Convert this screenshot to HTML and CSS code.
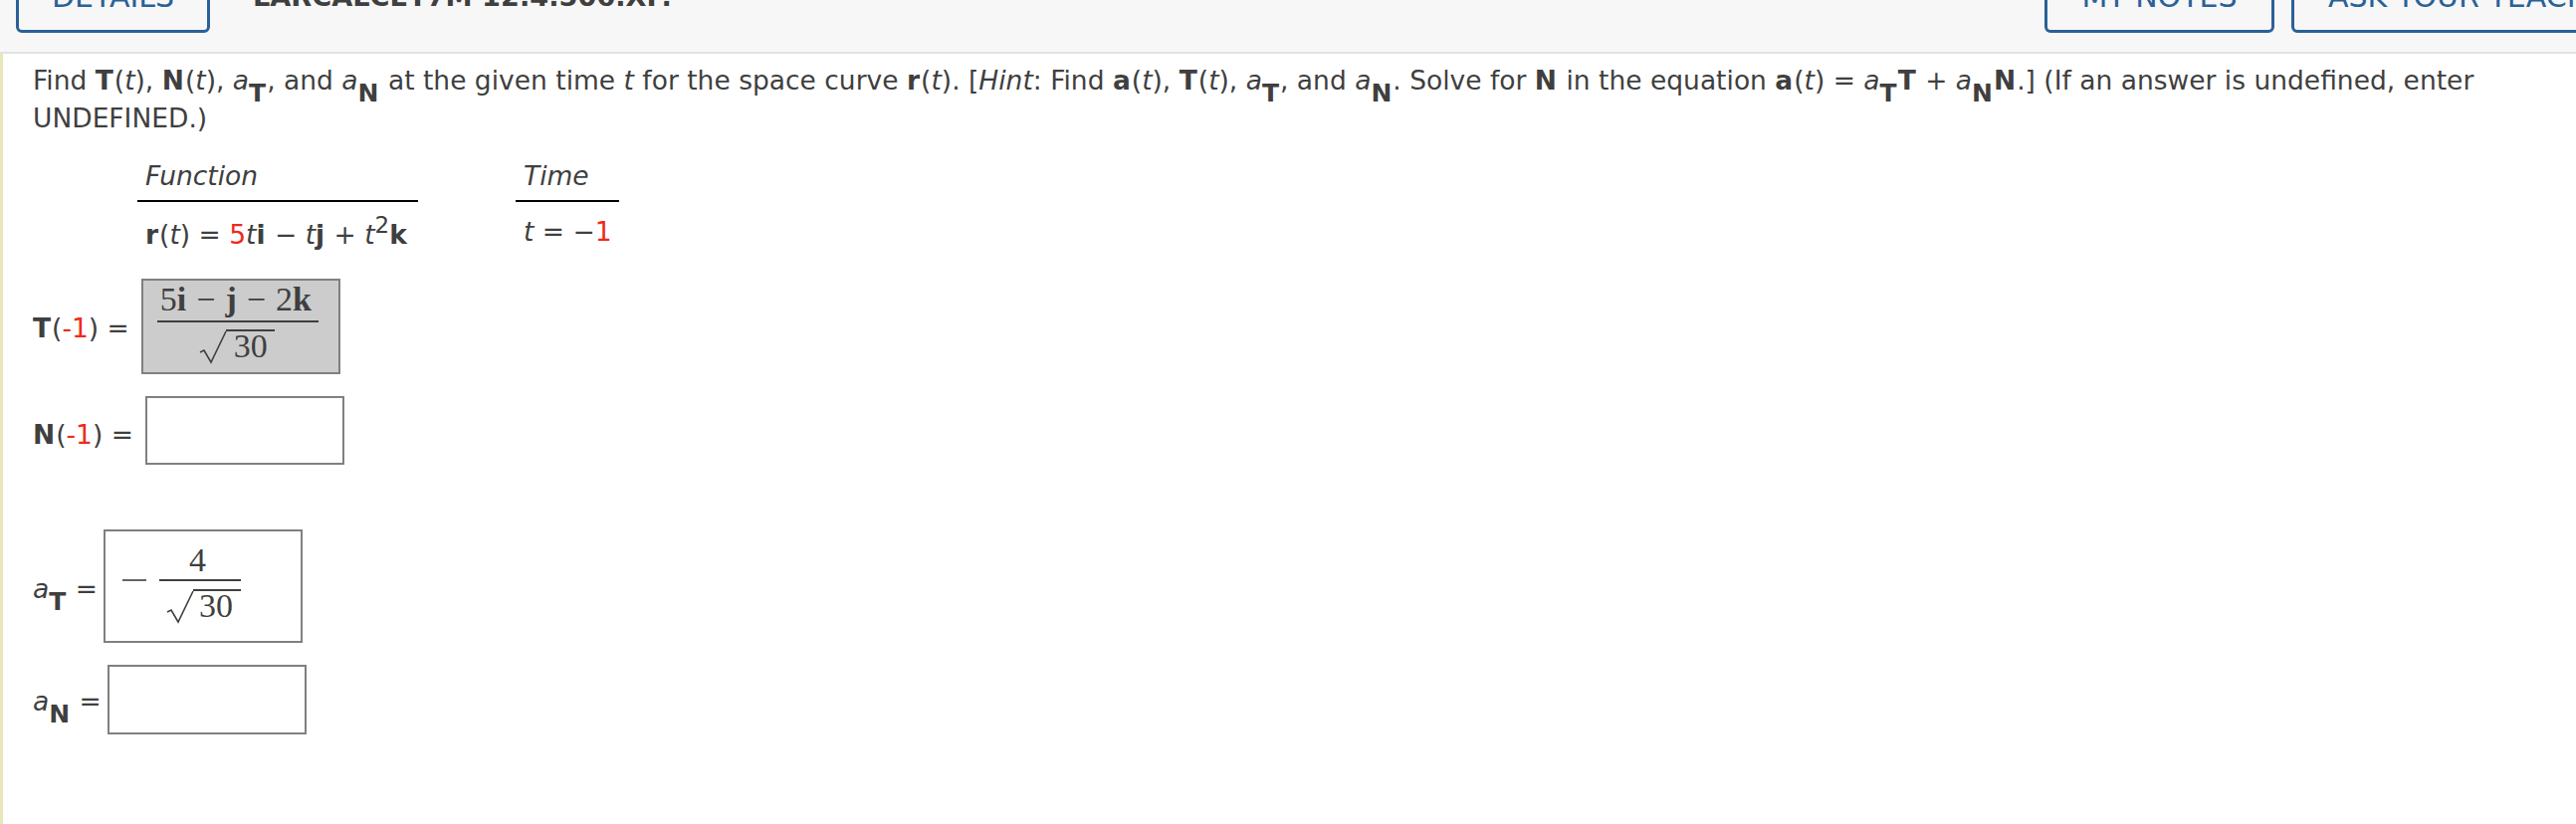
FILE: index.html
```html
<!DOCTYPE html>
<html lang="en">
<head>
<meta charset="utf-8">
<title>LARCALCET7M 12.4.506.XP.</title>
<link rel="stylesheet" href="styles.css">
</head>
<body>
<header class="topbar">
  <button class="btn btn-details">DETAILS</button>
  <h1 class="title">LARCALCET7M 12.4.506.XP.</h1>
  <button class="btn btn-notes">MY NOTES</button>
  <button class="btn btn-ask">ASK YOUR TEACHER</button>
</header>
<main class="question">
  <p class="prompt">Find <b>T</b>(<i>t</i>), <b>N</b>(<i>t</i>), <i>a</i><b class="sub">T</b>, and <i>a</i><b class="sub">N</b> at the given time <i>t</i> for the space curve <b>r</b>(<i>t</i>). [<i>Hint</i>: Find <b>a</b>(<i>t</i>), <b>T</b>(<i>t</i>), <i>a</i><b class="sub">T</b>, and <i>a</i><b class="sub">N</b>. Solve for <b>N</b> in the equation <b>a</b>(<i>t</i>) = <i>a</i><b class="sub">T</b><b>T</b> + <i>a</i><b class="sub">N</b><b>N</b>.] (If an answer is undefined, enter UNDEFINED.)</p>
  <div class="given">
    <div class="given-head"><i>Function</i></div>
    <div class="given-head"><i>Time</i></div>
    <div class="given-cell"><b>r</b>(<i>t</i>) = <span class="red">5</span><i>t</i><b>i</b> − <i>t</i><b>j</b> + <i>t</i><sup class="sup">2</sup><b>k</b></div>
    <div class="given-cell given-time"><i>t</i> = −<span class="red">1</span></div>
  </div>
  <div class="row row-t">
    <span class="label"><b>T</b>(<span class="red">-1</span>) =</span>
    <div class="box box-t filled">
      <div class="frac">
        <div class="num">5<b>i</b><span class="op">−</span><b>j</b><span class="op">−</span>2<b>k</b></div>
        <div class="den den-t"><svg class="rad" viewBox="0 0 34 34" width="34" height="34"><path d="M1 22 L5 20 L12 32 L27 1" fill="none" stroke="#3f3f3f" stroke-width="1.6"/></svg><span class="rad-body">30</span></div>
      </div>
    </div>
  </div>
  <div class="row row-n">
    <span class="label"><b>N</b>(<span class="red">-1</span>) =</span>
    <div class="box box-n"></div>
  </div>
  <div class="row row-at">
    <span class="label"><i>a</i><b class="sub">T</b> =</span>
    <div class="box box-at">
      <span class="minus"></span>
      <div class="frac frac-at">
        <div class="num">4</div>
        <div class="den den-at"><svg class="rad" viewBox="0 0 34 34" width="34" height="34"><path d="M1 22 L5 20 L12 32 L27 1" fill="none" stroke="#3f3f3f" stroke-width="1.6"/></svg><span class="rad-body">30</span></div>
      </div>
    </div>
  </div>
  <div class="row row-an">
    <span class="label"><i>a</i><b class="sub">N</b> =</span>
    <div class="box box-an"></div>
  </div>
</main>
</body>
</html>
```
FILE: styles.css
```css
* { box-sizing: border-box; }
html, body { margin: 0; height: 100%; overflow: hidden; background: #fff; }
body { font-family: "DejaVu Sans", Verdana, sans-serif; color: #3f3f3f; font-size: 26.5px; }
.topbar {
  height: 54px;
  background: #f7f7f7;
  border-bottom: 2px solid #e2e2e2;
  display: flex;
  align-items: flex-end;
  overflow: hidden;
  padding: 0 0 19px 16px;
}
.btn {
  flex: none;
  height: 60px;
  font: 30px "DejaVu Sans", sans-serif;
  color: #2a6197;
  background: transparent;
  border: 3px solid #2a6197;
  border-radius: 6px;
  padding: 0 0 18px;
  display: flex;
  align-items: flex-end;
  line-height: 30px;
  white-space: nowrap;
  justify-content: center;
}
.btn-details { width: 195px; }
.btn-notes { width: 231px; margin-left: auto; }
.btn-ask { width: 330px; margin-left: 17px; margin-right: -44px; justify-content: flex-start; padding-left: 34px; }
.title {
  margin: 0 0 23px 43px;
  font-size: 27.2px;
  line-height: 27px;
  font-weight: 700;
  white-space: nowrap;
  color: #3f3f3f;
}
.question {
  border-left: 3px solid #e7e7b9;
  height: calc(100% - 54px);
  padding: 0 0 0 30px;
}
.prompt { margin: 0; padding-top: 8px; width: 2480px; line-height: 38px; }
.question b { letter-spacing: 1px; }
.frac b { letter-spacing: 0; }
.sub { font-size: 25px; line-height: 0; vertical-align: -12px; }
.sup { font-size: 23px; line-height: 0; vertical-align: 11px; }
.red { color: #ee2a1b; }
.given {
  display: grid;
  grid-template-columns: 282px 104px;
  column-gap: 98px;
  margin: 20px 0 0 105px;
}
.given-head { padding: 0 8px 0; line-height: 38px; height: 45px; border-bottom: 2px solid #000; }
.given-cell { padding: 14px 8px 0; line-height: 38px; height: 77px; white-space: nowrap; }
.given-time { position: relative; top: -3px; }
.row { display: flex; align-items: center; }
.label { white-space: pre; line-height: 38px; }
.box { border: 2px solid #808080; flex: none; width: 200px; }
.filled { background: #ccc; }
.row-t { height: 96px; gap: 12px; }
.row-n { height: 69px; margin-top: 22px; gap: 12px; }
.row-at { height: 114px; margin-top: 65px; gap: 6px; }
.row-an { height: 70px; margin-top: 22px; gap: 6px; }
.box-t { height: 96px; padding: 0 0 0 14px; }
.box-n { height: 69px; }
.box-at { height: 114px; display: flex; align-items: flex-start; padding-left: 17px; }
.box-an { height: 70px; }
.row-t .label { position: relative; top: 2px; }
.row-n .label { position: relative; top: 4px; }
.row-at .label { position: relative; top: 3px; }
.row-an .label { position: relative; top: 2px; }
.frac {
  font-family: "Liberation Serif", serif;
  font-size: 34px;
  display: inline-flex;
  flex-direction: column;
  align-items: flex-start;
  width: 162px;
}
.num {
  height: 42px;
  line-height: 38px;
  border-bottom: 2px solid #3f3f3f;
  text-align: center;
  white-space: nowrap;
  width: 162px;
  padding-right: 4px;
}
.op { margin: 0 10px; }
.den { display: flex; align-items: flex-start; height: 40px; }
.den-t { margin: 7px 0 0 42px; }
.rad { flex: none; margin-top: 1px; }
.rad-body {
  border-top: 2px solid #3f3f3f;
  margin-left: -7px;
  padding: 0 7px 0 8px;
  line-height: 30px;
  height: 32px;
}
.minus { width: 24px; height: 2px; background: #3f3f3f; margin-top: 48px; flex: none; opacity: .8; }
.frac-at { width: 82px; margin: 10px 0 0 13px; }
.frac-at .num { width: 82px; height: 40px; padding-right: 5px; }
.den-at { margin: 8px 0 0 7px; }
.den-at .rad-body { padding: 0 8px 0 6px; }
```
